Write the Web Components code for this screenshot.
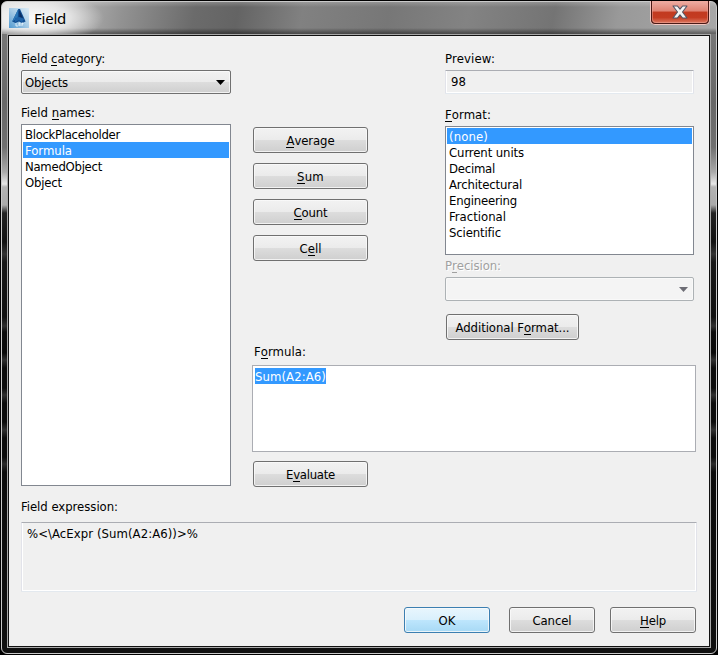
<!DOCTYPE html>
<html lang="en">
<head>
<meta charset="utf-8">
<title>Field</title>
<style>
html,body{margin:0;background:#fff;overflow:hidden}
body{font:13px/16px "DejaVu Sans Condensed","DejaVu Sans",sans-serif;font-stretch:condensed;color:#000}
</style>
</head>
<body>
<field-dialog></field-dialog>
<script>
const define = (name, html, setup) => customElements.define(name, class extends HTMLElement {
  connectedCallback() {
    if (this.shadowRoot) return;
    const t = document.createElement('template');
    t.innerHTML = html;
    this.attachShadow({mode:'open'}).append(t.content.cloneNode(true));
    if (setup) setup.call(this, this.shadowRoot);
  }
});

/* Text run with an optional advance width (w) and underlined access key (k = index). */
define('ui-text', `<style>
:host{display:block;white-space:pre;height:16px;line-height:16px}
span{display:inline-block}u{text-decoration:none;box-shadow:0 1px 0 currentColor;display:inline-block;height:14px;line-height:16px;vertical-align:top}
</style><span></span>`, function (r) {
  const s = r.querySelector('span'), t = this.getAttribute('t'), k = this.getAttribute('k');
  if (k === null) s.textContent = t;
  else {
    const u = document.createElement('u');
    u.textContent = t[+k];
    s.append(t.slice(0, +k), u, t.slice(+k + 1));
  }
  const w = +this.getAttribute('w');
  if (w) {
    const ls = (w - s.getBoundingClientRect().width) / t.length;
    s.style.letterSpacing = ls + 'px';
  }
});

define('ui-button', `<style>
:host{display:flex;box-sizing:border-box;width:115px;height:26px;flex:none;align-items:center;justify-content:center;padding-top:1px;border:1px solid #707070;border-radius:3px;
background:linear-gradient(#f2f2f2 0,#ebebeb 50%,#dddddd 50%,#cfcfcf 100%);box-shadow:inset 0 0 0 1px #fafafacc}
:host([primary]){border-color:#3c7fb1;background:linear-gradient(#e8f6fd 0,#d9f0fc 50%,#bee6fd 50%,#a7d9f5 100%)}
</style><slot></slot>`);

define('ui-combo', `<style>
:host{display:flex;box-sizing:border-box;height:24px;align-items:center;justify-content:space-between;padding:1px 5px 0 3px;border:1px solid #707070;border-radius:2px;
background:linear-gradient(#f2f2f2 0,#ebebeb 50%,#dddddd 50%,#cfcfcf 100%);box-shadow:inset 0 0 0 1px #fafafacc;color:#000}
:host([disabled]){background:#f4f4f4;border-color:#adb2b5}
svg{display:block}:host([disabled]) svg{fill:#6d6d75}
</style><slot></slot><svg width="9" height="5"><path d="M0 0H9L4.5 5Z"/></svg>`);

define('ui-list', `<style>
:host{display:block;box-sizing:border-box;border:1px solid #828790;background:#fff;padding:1px}
</style><slot></slot>`);
define('ui-item', `<style>
:host{display:block;box-sizing:border-box;height:16px;padding:1px 0 0 2px}
:host([selected]){background:#3399ff;color:#fff}
</style><slot></slot>`);

define('ui-sunken', `<style>
:host{display:block;box-sizing:border-box;border:1px solid;border-color:#abadb3 #e2e3ea #e3e9ef #e2e3ea;box-shadow:inset 1px 0 #fff,inset -1px -1px #fff;border-radius:1px}
</style><slot></slot>`);

define('ui-edit', `<style>
:host{display:block;box-sizing:border-box;border:1px solid #abadb3;background:#fff;padding:2px 2px}
div{display:inline-block;box-sizing:border-box;height:16px;padding-top:1px;vertical-align:top;background:#39f;color:#fff}
</style><div><slot></slot></div>`);

define('title-bar', `<style>
:host{display:flex;height:32px;position:relative;align-items:flex-start;justify-content:space-between}
.name{display:flex;gap:5px;padding:6px 0 0 7px}
.name svg{display:block}
.name ui-text{font:15px/20px "Noto Sans","Open Sans",sans-serif;height:20px;line-height:20px}
.close{box-sizing:border-box;width:60px;height:24px;margin-right:6px;margin-top:-1px;border:1px solid #f3c6c0;border-top:0;border-radius:0 0 5px 5px;background:#4b1a16;padding:0 1px 1px}
.close div{height:22px;border-radius:0 0 4px 4px;background:linear-gradient(#eeaea4 0,#df8474 44%,#c23a20 52%,#c43c22 75%,#dd7961 100%);box-shadow:inset 0 0 0 1px #f0a79b80;display:flex;justify-content:center;align-items:center}
</style>
<div class="name"><svg width="20" height="20" viewBox="0 0 20 20">
<defs><linearGradient id="b" x1="0" y1="1" x2="1" y2="0"><stop stop-color="#5099d0"/><stop offset=".5" stop-color="#a6cbe6"/><stop offset="1" stop-color="#dcebf5"/></linearGradient></defs>
<rect width="20" height="20" fill="url(#b)"/><path d="M9.3 1H11l5.6 12.5-3.4 1.5L10 13.5 6.4 15 3.2 13.5Z" fill="#114d91"/><path d="M9.3 1 8.7 10 3.2 13.5Z" fill="#2d79b9"/><path d="M10.2 2 14 10 10.5 9Z" fill="#0a2e63"/><path d="m6 10 4-1 5 2-2 3-3-2-4 2Z" fill="#2064a9"/>
<path d="M7 15v3h2M10 18v-3h1v3M13 18v-3h1v1h-1" fill="none" stroke="#eef8ff" stroke-width=".8"/></svg>
<ui-text t="Field" w="32"></ui-text></div>
<div class="close"><div><svg width="16" height="14" viewBox="0 0 16 14"><path d="M1 1H5.4L8 4.2 10.6 1H15L10.5 7 15 13H10.6L8 9.8 5.4 13H1L5.5 7Z" fill="#f4f4f4" stroke="#535666" stroke-width="1.1" stroke-linejoin="round"/></svg></div></div>`);

define('field-dialog', `<style>
:host{display:block;width:718px;height:655px;box-sizing:border-box;background:#000;padding:1px}
.frame{box-sizing:border-box;width:716px;height:653px;border:1px solid #c9c9c9;border-radius:6px;
background:
radial-gradient(ellipse 68px 26px at 34px 16px,#fffffff0 0,#ffffffa0 50%,#fff0 100%) 0 0/100% 32px no-repeat,
linear-gradient(#fff3 0,#fff0 5px,#0000 26px,#0006 31px) 0 0/100% 32px no-repeat,
linear-gradient(100deg,#d0d0d0 0,#b8b8b8 9%,#929292 17%,#6b6b6b 27%,#646464 33%,#818181 42%,#777 54%,#838383 65%,#747474 77%,#999 86%,#a8a8a8 100%) 0 0/100% 32px no-repeat,
linear-gradient(#777 32px,#686868 100px,#707070 145px,#aaa 170px,#e8e8e8 182px,#b4b4b4 185px,#aaa 203px,#222 211px,#111 240px,#333 252px,#181818 260px,#101010 315px,#303030 324px,#0b0b0b 330px,#090909 351px,#303030 358px,#0b0b0b 366px,#0b0b0b 386px,#303030 393px,#0b0b0b 401px,#0b0b0b 420px,#303030 428px,#0b0b0b 436px,#0b0b0b 455px,#2b2b2b 462px,#0b0b0b 470px,#101010 100%)}
.client{box-sizing:border-box;width:704px;height:614px;margin-left:5px;border:1px solid #a8a8a8}
.in{box-sizing:border-box;width:702px;height:612px;border:1px solid #111;background:#f0f0f0;padding:15px 12px 0}
.main{display:flex;gap:21px;height:436px}
.left{width:210px}
.work{width:444px}
.top{display:flex;justify-content:space-between;height:293px}
.ops{display:flex;flex-direction:column;gap:10px;padding:76px 0 0 1px}
.fmt{width:249px;margin-right:2px}
.dis{color:#a0a0a0;text-shadow:1px 1px #fff}
.foot{display:flex;justify-content:flex-end;padding-top:15px;margin-right:1px}
.foot ui-button{width:86px}
</style>
<div class="frame"><title-bar></title-bar>
<div class="client"><div class="in">
<div class="main">
 <div class="left">
  <ui-text t="Field category:" k="6" w="84"></ui-text>
  <ui-combo style="margin-top:3px"><ui-text t="Objects" w="43"></ui-text></ui-combo>
  <ui-text style="margin-top:11px" t="Field names:" k="6" w="74"></ui-text>
  <ui-list style="margin-top:3px;height:362px">
   <ui-item><ui-text t="BlockPlaceholder" w="95"></ui-text></ui-item>
   <ui-item selected><ui-text t="Formula" w="47"></ui-text></ui-item>
   <ui-item><ui-text t="NamedObject" w="77"></ui-text></ui-item>
   <ui-item><ui-text t="Object" w="37"></ui-text></ui-item>
  </ui-list>
 </div>
 <div class="work">
  <div class="top">
   <div class="ops">
    <ui-button><ui-text t="Average" k="0" w="48"></ui-text></ui-button>
    <ui-button><ui-text t="Sum" k="0" w="27"></ui-text></ui-button>
    <ui-button><ui-text t="Count" k="0" w="34"></ui-text></ui-button>
    <ui-button><ui-text t="Cell" k="1" w="22"></ui-text></ui-button>
   </div>
   <div class="fmt">
    <ui-text t="Preview:" w="50"></ui-text>
    <ui-sunken style="margin-top:3px;height:24px;padding:3px 5px"><ui-text t="98" w="15"></ui-text></ui-sunken>
    <ui-text style="margin-top:13px" t="Format:" k="0" w="46"></ui-text>
    <ui-list style="margin-top:3px;height:129px">
     <ui-item selected><ui-text t="(none)" w="39"></ui-text></ui-item>
     <ui-item><ui-text t="Current units" w="75"></ui-text></ui-item>
     <ui-item><ui-text t="Decimal" w="46"></ui-text></ui-item>
     <ui-item><ui-text t="Architectural" w="73"></ui-text></ui-item>
     <ui-item><ui-text t="Engineering" w="68"></ui-text></ui-item>
     <ui-item><ui-text t="Fractional" w="57"></ui-text></ui-item>
     <ui-item><ui-text t="Scientific" w="52"></ui-text></ui-item>
    </ui-list>
    <ui-text class="dis" style="margin-top:3px" t="Precision:" k="1" w="56"></ui-text>
    <ui-combo disabled style="margin-top:3px"><span></span></ui-combo>
    <ui-button style="width:133px;margin:13px 0 0 1px"><ui-text t="Additional Format..." k="12" w="114"></ui-text></ui-button>
   </div>
  </div>
  <ui-text style="margin-left:2px" t="Formula:" k="1" w="52"></ui-text>
  <ui-edit style="margin-top:5px;height:87px"><ui-text t="Sum(A2:A6)" w="71"></ui-text></ui-edit>
  <ui-button style="margin:9px 0 0 1px"><ui-text t="Evaluate" k="1" w="49"></ui-text></ui-button>
 </div>
</div>
<ui-text style="margin-top:12px" t="Field expression:" w="97"></ui-text>
<ui-sunken style="margin-top:7px;height:70px;padding:3px 5px"><ui-text t="%&lt;\\AcExpr (Sum(A2:A6))&gt;%" w="171"></ui-text></ui-sunken>
<div class="foot">
 <ui-button primary><ui-text t="OK" w="17"></ui-text></ui-button>
 <ui-button style="margin-left:19px"><ui-text t="Cancel" w="39"></ui-text></ui-button>
 <ui-button style="margin-left:15px"><ui-text t="Help" k="0" w="26"></ui-text></ui-button>
</div>
</div></div></div>`);
</script>
</body>
</html>
